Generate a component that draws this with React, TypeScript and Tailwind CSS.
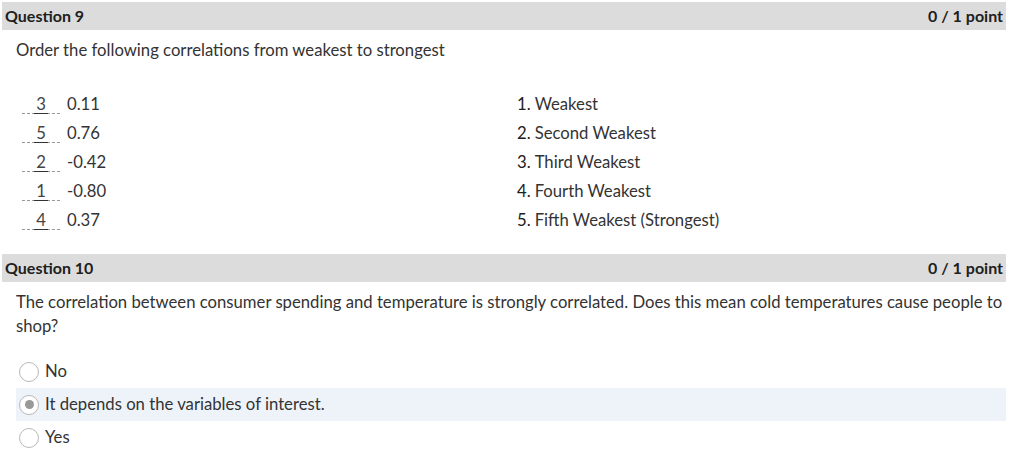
import React from 'react';

const pairs = [
  { answer: '3', value: '0.11' },
  { answer: '5', value: '0.76' },
  { answer: '2', value: '-0.42' },
  { answer: '1', value: '-0.80' },
  { answer: '4', value: '0.37' }
];

const choices = ['Weakest', 'Second Weakest', 'Third Weakest', 'Fourth Weakest', 'Fifth Weakest (Strongest)'];

const options = [
  { label: 'No', selected: false },
  { label: 'It depends on the variables of interest.', selected: true },
  { label: 'Yes', selected: false }
];

function QuestionHeader(props: { title: string }) {
  return (
    <div className="flex items-center justify-between bg-[#dcdcdc] h-[28px] pl-[3px] pr-[3px] font-bold text-[16px] text-[#202020]">
      <span>{props.title}</span>
      <span>0 / 1 point</span>
    </div>
  );
}

function Radio(props: { selected: boolean }) {
  return (
    <span className="w-[20px] h-[20px] rounded-full border border-[#b8b8b8] bg-white flex items-center justify-center shrink-0">
      {props.selected && <span className="w-[9px] h-[9px] rounded-full bg-[#999]" />}
    </span>
  );
}

export default function App() {
  return (
    <div className="w-[1024px] h-[464px] bg-white overflow-hidden text-[#333] text-[16.7px]" style={{ fontFamily: 'Lato, "Open Sans", sans-serif' }}>
      <div className="pt-[2px] pl-[2px] w-[1006px]">
        <QuestionHeader title="Question 9" />
        <div className="pl-[14px] pt-[10px] leading-[20px]">Order the following correlations from weakest to strongest</div>

        <div className="flex pl-[20px] pt-[30px] pb-[19px]">
          <div className="w-[495px] flex flex-col">
            {pairs.map((p) => (
              <div key={p.value} className="h-[29px] flex items-center">
                <span className="w-[38px] h-[19px] flex items-end justify-center border-b border-dashed border-[#999]">
                  <span className="border-b border-[#333] -mb-[1px] leading-[17px] px-[2px] text-[#444]">{p.answer}</span>
                </span>
                <span className="ml-[7px]">{p.value}</span>
              </div>
            ))}
          </div>
          <div className="flex flex-col">
            {choices.map((c, i) => (
              <div key={c} className="h-[29px] flex items-center">
                <span className="text-[#202020]">{i + 1}.</span>
                <span className="ml-[4px]">{c}</span>
              </div>
            ))}
          </div>
        </div>

        <QuestionHeader title="Question 10" />
        <div className="pl-[14px] pr-[2px] pt-[8px] leading-[24px]">
          The correlation between consumer spending and temperature is strongly correlated. Does this mean cold temperatures cause people to shop?
        </div>

        <div className="pl-[14px] pt-[17px] flex flex-col">
          {options.map((o) => (
            <div key={o.label} className={`h-[33px] flex items-center gap-[6px] pl-[3px] ${o.selected ? 'bg-[#eef3fa]' : ''}`}>
              <Radio selected={o.selected} />
              <span>{o.label}</span>
            </div>
          ))}
        </div>
      </div>
    </div>
  );
}
